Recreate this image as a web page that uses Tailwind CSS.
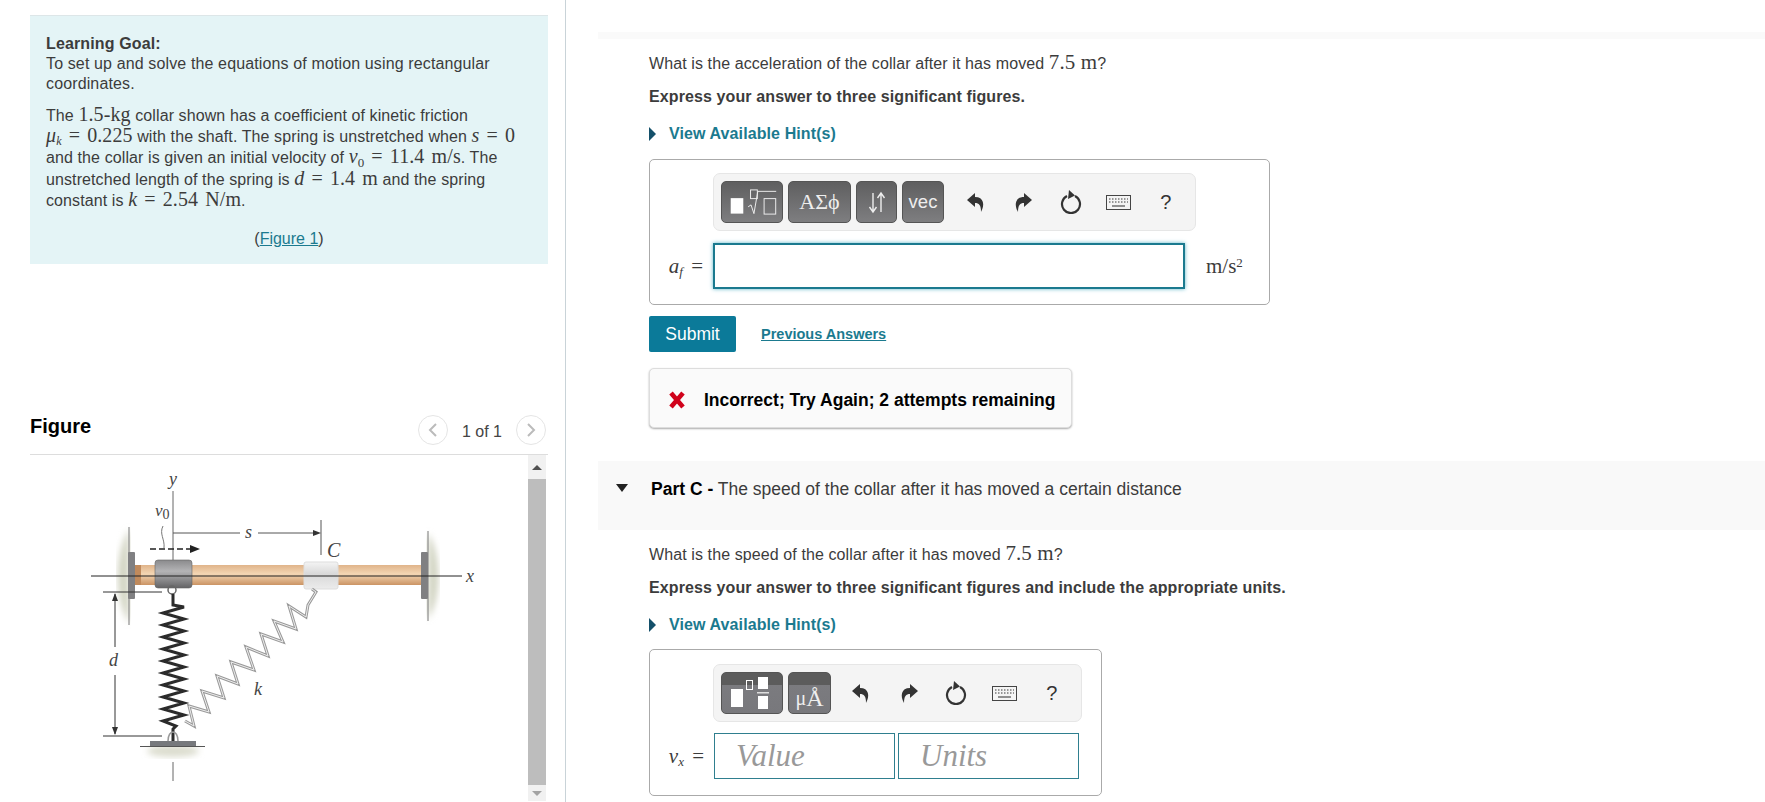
<!DOCTYPE html>
<html>
  <head>
    <meta charset="UTF-8" />
    <title>Part C</title>
    <script src="https://cdn.jsdelivr.net/npm/@tailwindcss/browser@4"></script>
  </head>
  <body class="bg-white font-['Liberation_Sans',Arial,sans-serif] text-[#3c3c3c]">
    <div class="flex h-[802px] w-[1765px] overflow-hidden">
      <!-- left column -->
      <div class="w-[566px] shrink-0 border-r border-[#c9d3d8] pl-[30px] pr-[17px] pt-[15px]">
        <div class="h-[249px] border-t border-[#dde6e8] bg-[#e4f4f6] px-[16px] pt-[18px] text-[16px] leading-[20px]">
          <p class="tracking-[0.13px]"><b class="font-bold">Learning Goal:</b><br />To set up and solve the equations of motion using rectangular coordinates.</p>
          <p class="mt-[11px] leading-[21.2px] tracking-[0.1px]">
            The <span class="font-['Liberation_Serif',serif] text-[20px] leading-[16px]">1.5-kg</span> collar shown has a coefficient of kinetic friction<br />
            <span class="font-['Liberation_Serif',serif] text-[20px] leading-[16px] [word-spacing:2px]"><i>μ<sub class="text-[12px]">k</sub></i> = 0.225</span> with the shaft. The spring is unstretched when <span class="font-['Liberation_Serif',serif] text-[20px] leading-[16px] [word-spacing:2px]"><i>s</i> = 0</span><br />
            and the collar is given an initial velocity of <span class="font-['Liberation_Serif',serif] text-[20px] leading-[16px] [word-spacing:2px]"><i>v</i><sub class="text-[13px]">0</sub> = 11.4 m/s</span>. The<br />
            unstretched length of the spring is <span class="font-['Liberation_Serif',serif] text-[20px] leading-[16px] [word-spacing:2px]"><i>d</i> = 1.4 m</span> and the spring<br />
            constant is <span class="font-['Liberation_Serif',serif] text-[20px] leading-[16px] [word-spacing:2px]"><i>k</i> = 2.54 N/m</span>.
          </p>
          <p class="mt-[18px] text-center">(<a class="text-[#1b7a8f] underline">Figure 1</a>)</p>
        </div>
        <div class="mt-[150px] flex h-[41px] items-start justify-between border-b border-[#ddd]">
          <h2 class="text-[20px] font-bold leading-[24px] text-black">Figure</h2>
          <div class="mr-[2px] flex items-center gap-[14px] pt-[1px] text-[16px] text-[#444]">
            <span class="flex h-[30px] w-[30px] items-center justify-center rounded-full border border-[#e5e5e5]">
              <svg width="10" height="16" viewBox="0 0 10 16" fill="none" stroke="#bbb" stroke-width="2"><path d="M8 2 L2 8 L8 14" /></svg>
            </span>
            <span class="pt-[3px]">1 of 1</span>
            <span class="flex h-[30px] w-[30px] items-center justify-center rounded-full border border-[#e5e5e5]">
              <svg width="10" height="16" viewBox="0 0 10 16" fill="none" stroke="#bbb" stroke-width="2"><path d="M2 2 L8 8 L2 14" /></svg>
            </span>
          </div>
        </div>
        <div class="flex h-[346px]">
          <svg class="shrink-0" width="498" height="346" viewBox="30 456 498 346">
            <defs>
              <linearGradient id="rod" x1="0" y1="0" x2="0" y2="1"><stop offset="0" stop-color="#e0b48a" /><stop offset="0.45" stop-color="#f3d6b4" /><stop offset="1" stop-color="#cb9464" /></linearGradient>
              <linearGradient id="steel" x1="0" y1="0" x2="0" y2="1"><stop offset="0" stop-color="#8a8a8c" /><stop offset="0.4" stop-color="#b4b4b6" /><stop offset="1" stop-color="#636365" /></linearGradient>
              <linearGradient id="ghost" x1="0" y1="0" x2="0" y2="1"><stop offset="0" stop-color="#f4f4f4" /><stop offset="0.45" stop-color="#d8d8d8" /><stop offset="1" stop-color="#ececec" /></linearGradient>
              <filter id="soft"><feGaussianBlur stdDeviation="3" /></filter>
            </defs>
            <!-- wall shading -->
            <path d="M129 530 C114 555 114 600 129 624 Z" fill="#d3d5c4" filter="url(#soft)" />
            <path d="M428 534 C442 555 442 600 428 620 Z" fill="#d3d5c4" filter="url(#soft)" />
            <ellipse cx="173" cy="752" rx="26" ry="6" fill="#dcddcf" filter="url(#soft)" />
            <path d="M129 528 V626 M428 532 V622" stroke="#777" stroke-width="1" />
            <rect x="128" y="553" width="7" height="47" rx="1" fill="#808082" />
            <rect x="421" y="553" width="7" height="47" rx="1" fill="#808082" />
            <!-- shaft -->
            <rect x="135" y="566" width="286" height="20" fill="url(#rod)" />
            <rect x="135" y="566" width="6" height="20" fill="#c08a5c" />
            <rect x="304" y="563" width="34" height="27" rx="2" fill="url(#ghost)" stroke="#ddd" />
            <rect x="155" y="561" width="37" height="28" rx="3" fill="url(#steel)" stroke="#666" stroke-width="0.6" />
            <path d="M91 577 H462" stroke="#222" stroke-width="1" />
            <!-- axes and dimensions -->
            <path d="M173 492 V561 M173 763 V782" stroke="#666" stroke-width="1" />
            <path d="M173 534 H240 M258 534 H318 M321 521 V556" stroke="#555" stroke-width="1" />
            <path d="M321 534 L313 531 V537 Z" fill="#333" />
            <path d="M150 550 H192" stroke="#222" stroke-width="1.4" stroke-dasharray="6 3" />
            <path d="M200 550 L190 546 V554 Z" fill="#222" />
            <path d="M163 527 C159 535 165 540 164 549" stroke="#777" fill="none" />
            <path d="M103 593 H162 M103 737 H162" stroke="#333" stroke-width="1" />
            <path d="M115 595 V648 M115 676 V735" stroke="#333" stroke-width="1" />
            <path d="M115 594 L112 602 H118 Z M115 736 L112 728 H118 Z" fill="#333" />
            <!-- ghost spring -->
            <path d="M312 590 L316 593 L308 606 L306 618 L289 607 L296 630 L274 622 L283 643 L261 635 L268 657 L246 648 L254 671 L231 663 L238 685 L217 677 L224 699 L202 692 L209 713 L189 707 L194 727 L185 722" fill="none" stroke="#9a9a9a" stroke-width="3" />
            <path d="M312 590 L316 593 L308 606 L306 618 L289 607 L296 630 L274 622 L283 643 L261 635 L268 657 L246 648 L254 671 L231 663 L238 685 L217 677 L224 699 L202 692 L209 713 L189 707 L194 727 L185 722" fill="none" stroke="#eee" stroke-width="1" />
            <!-- spring -->
            <circle cx="172" cy="591" r="4" fill="none" stroke="#666" stroke-width="1.5" />
            <path d="M173 595 V606 L184 608 L163 614 L184 620 L163 626 L184 632 L163 638 L184 644 L163 650 L184 656 L163 662 L184 668 L163 674 L184 680 L163 686 L184 692 L163 698 L184 704 L163 710 L184 716 L163 722 L176 727 L173 730 V742" fill="none" stroke="#2b2b2b" stroke-width="3" />
            <path d="M168 742 C168 730 178 730 178 742" fill="none" stroke="#999" stroke-width="1.5" />
            <rect x="150" y="742" width="46" height="5" fill="#77797d" />
            <path d="M140 747.5 H205" stroke="#555" stroke-width="1" />
            <!-- labels -->
            <g font-family="Liberation Serif, serif" font-style="italic" fill="#444">
              <text x="169" y="486" font-size="18">y</text>
              <text x="155" y="517" font-size="17">v<tspan font-size="14" font-style="normal" dy="3">0</tspan></text>
              <text x="245" y="539" font-size="18">s</text>
              <text x="327" y="558" font-size="20">C</text>
              <text x="466" y="583" font-size="18">x</text>
              <text x="109" y="667" font-size="18">d</text>
              <text x="254" y="696" font-size="18">k</text>
            </g>
          </svg>
          <!-- scrollbar -->
          <div class="flex w-[18px] flex-col items-center bg-white">
            <div class="flex h-[24px] w-full items-center justify-center bg-[#f1f1f1]">
              <div class="h-0 w-0 border-x-[5px] border-b-[5px] border-x-transparent border-b-[#505050]"></div>
            </div>
            <div class="h-[306px] w-full bg-[#bdbdbd]"></div>
            <div class="flex h-[16px] w-full items-center justify-center bg-[#f1f1f1]">
              <div class="h-0 w-0 border-x-[5px] border-t-[5px] border-x-transparent border-t-[#a3a3a3]"></div>
            </div>
          </div>
        </div>
      </div>

      <!-- right column -->
      <div class="flex-1 pl-[32px] pt-[32px] text-[16px] leading-[20px]">
        <div class="h-[7px] bg-[#fafafa]"></div>
        <div class="pl-[51px]">
          <p class="mt-[15px] tracking-[0.1px]">What is the acceleration of the collar after it has moved <span class="font-['Liberation_Serif',serif] text-[21px] leading-[16px]">7.5 m</span>?</p>
          <p class="mt-[13px] font-bold tracking-[0.11px]">Express your answer to three significant figures.</p>
          <p class="mt-[17px] flex items-center font-bold tracking-[0.1px] text-[#1b7a8f]">
            <span class="mr-[13px] h-0 w-0 border-y-[7px] border-l-[7px] border-y-transparent border-l-[#14506a]"></span>View Available Hint(s)
          </p>

          <!-- answer box a_f -->
          <div class="mt-[15px] flex h-[146px] w-[621px] flex-col rounded-[5px] border border-[#aaa] pl-[63px] pt-[13px]">
            <div class="flex h-[58px] w-[483px] items-center rounded-[7px] border border-[#e6e6e6] bg-[#f4f4f4] pl-[7px]">
              <div class="flex gap-[5px] text-[#eee]">
                <span class="flex h-[42px] w-[62px] items-center justify-center rounded-[5px] border border-[#555] bg-linear-to-b from-[#5f5f60] to-[#7e7e80]">
                  <svg width="62" height="42" viewBox="0 0 62 42" fill="none" stroke="#eee"><rect x="9" y="17" width="13" height="16" fill="#fff" stroke="none" /><rect x="29.5" y="8.5" width="7" height="9" /><path d="M27 26 L30 24 L33 33 L37 10 H56" /><rect x="43.5" y="17.5" width="12" height="16" /></svg>
                </span>
                <span class="flex h-[42px] w-[63px] items-center justify-center rounded-[5px] border border-[#555] bg-linear-to-b from-[#5f5f60] to-[#7e7e80] font-['Liberation_Serif',serif] text-[22px]">ΑΣϕ</span>
                <span class="flex h-[42px] w-[41px] items-center justify-center rounded-[5px] border border-[#555] bg-linear-to-b from-[#5f5f60] to-[#7e7e80]">
                  <svg width="20" height="26" viewBox="0 0 20 26" fill="none" stroke="#eee" stroke-width="1.4"><path d="M6 4 V23 M2.5 18 L6 23 L9.5 18 M14 23 V4 M10.5 9 L14 4 L17.5 9" /></svg>
                </span>
                <span class="flex h-[42px] w-[42px] items-center justify-center rounded-[5px] border border-[#555] bg-linear-to-b from-[#5f5f60] to-[#7e7e80] text-[18.5px]">vec</span>
              </div>
              <div class="ml-[8px] flex items-center text-[#333]">
                <span class="flex w-[47.5px] justify-center"><svg width="20" height="24" viewBox="0 0 20 24" fill="#333"><path d="M9 3 L1 10 L9 17 V13 C13 13 15 15 15 22 C19 15 18 7 9 7 Z" /></svg></span>
                <span class="flex w-[47.5px] justify-center"><svg width="20" height="24" viewBox="0 0 20 24" fill="#333"><path d="M11 3 L19 10 L11 17 V13 C7 13 5 15 5 22 C1 15 2 7 11 7 Z" /></svg></span>
                <span class="flex w-[47.5px] justify-center"><svg width="22" height="24" viewBox="0 0 22 24" fill="none" stroke="#333" stroke-width="2.2"><path d="M7 6 A9 9 0 1 0 15 6" /><path d="M9 0 L15 5.5 L8 9 Z" fill="#333" stroke="none" /></svg></span>
                <span class="flex w-[47.5px] justify-center"><svg width="25" height="15" viewBox="0 0 25 15" fill="none" stroke="#444"><rect x="0.5" y="0.5" width="24" height="14" /><path d="M3 4 H22 M3 7 H22" stroke-dasharray="1.5 1.5" stroke-width="1.6" stroke="#777" /><path d="M6 11 H19" stroke-width="1.6" stroke="#777" /></svg></span>
                <span class="w-[47.5px] text-center text-[20px]">?</span>
              </div>
            </div>
            <div class="mt-[12px] flex items-center">
              <span class="ml-[-50px] w-[50px] pr-[10px] text-right font-['Liberation_Serif',serif] text-[21px] [word-spacing:3px] whitespace-nowrap"><i>a<sub class="text-[13px]">f</sub></i> =</span>
              <div class="h-[46px] w-[472px] border-2 border-[#1b7a8f] bg-white shadow-[0_0_4px_#5fb6c9]"></div>
              <span class="ml-[21px] font-['Liberation_Serif',serif] text-[21px]">m/s<sup class="text-[13px]">2</sup></span>
            </div>
          </div>

          <div class="mt-[11px] flex items-center">
            <span class="flex h-[36px] w-[87px] items-center justify-center rounded-[2px] bg-[#0b7a99] text-[17.5px] text-white">Submit</span>
            <a class="mb-[1px] ml-[25px] text-[14.5px] font-bold text-[#1b7a8f] underline">Previous Answers</a>
          </div>

          <div class="mt-[16px] flex h-[60px] w-[423px] items-center rounded-[5px] border border-[#ddd] bg-[#fafafa] pl-[18px] pt-[4px] text-black shadow-[0_1px_2px_#aaa]">
            <svg width="18" height="18" viewBox="0 0 18 18" fill="none" stroke="#d0021b" stroke-width="4.6"><path d="M3 2 L15 16 M15 2 L3 16" /></svg>
            <span class="ml-[18px] text-[17.5px] font-bold">Incorrect; Try Again; 2 attempts remaining</span>
          </div>
        </div>

        <!-- Part C -->
        <div class="mt-[33px] flex h-[69px] bg-[#f9f9f9] pt-[16px]">
          <span class="ml-[18px] mt-[7px] h-0 w-0 border-x-[6px] border-t-[8px] border-x-transparent border-t-[#222]"></span>
          <p class="ml-[23px] mt-[2px] text-[17.5px]"><b class="font-bold text-black">Part C -</b> The speed of the collar after it has moved a certain distance</p>
        </div>
        <div class="pl-[51px]">
          <p class="mt-[15px] tracking-[0.1px]">What is the speed of the collar after it has moved <span class="font-['Liberation_Serif',serif] text-[21px] leading-[16px]">7.5 m</span>?</p>
          <p class="mt-[13px] font-bold tracking-[0.11px]">Express your answer to three significant figures and include the appropriate units.</p>
          <p class="mt-[17px] flex items-center font-bold tracking-[0.1px] text-[#1b7a8f]">
            <span class="mr-[13px] h-0 w-0 border-y-[7px] border-l-[7px] border-y-transparent border-l-[#14506a]"></span>View Available Hint(s)
          </p>

          <!-- answer box v_x -->
          <div class="mt-[14px] flex h-[147px] w-[453px] flex-col rounded-[5px] border border-[#aaa] pl-[63px] pt-[14px]">
            <div class="flex h-[58px] w-[369px] items-center rounded-[7px] border border-[#e6e6e6] bg-[#f4f4f4] pl-[7px]">
              <div class="flex gap-[5px] text-[#eee]">
                <span class="h-[42px] w-[62px] rounded-[5px] border border-[#555] bg-[linear-gradient(#5c5c5c_0,#5c5c5c_30%,#7b7b7f_30%,#78787c_100%)]">
                  <svg width="60" height="40" viewBox="0 0 60 40" fill="none"><rect x="9" y="16" width="12" height="18" fill="#fff" /><rect x="24.5" y="7.5" width="6" height="9" stroke="#fff" /><rect x="36" y="4" width="10" height="12" fill="#fff" /><rect x="35" y="19" width="12" height="1.5" fill="#ddd" /><rect x="36" y="23" width="10" height="13" fill="#fff" /></svg>
                </span>
                <span class="flex h-[42px] w-[43px] items-end justify-center rounded-[5px] border border-[#555] bg-[linear-gradient(#5c5c5c_0,#5c5c5c_30%,#7b7b7f_30%,#78787c_100%)] pb-[3px] font-['Liberation_Serif',serif] text-[20px] leading-[24px]">μ<span class="text-[24px]">Å</span></span>
              </div>
              <div class="ml-[6px] flex items-center text-[#333]">
                <span class="flex w-[47.75px] justify-center"><svg width="20" height="24" viewBox="0 0 20 24" fill="#333"><path d="M9 3 L1 10 L9 17 V13 C13 13 15 15 15 22 C19 15 18 7 9 7 Z" /></svg></span>
                <span class="flex w-[47.75px] justify-center"><svg width="20" height="24" viewBox="0 0 20 24" fill="#333"><path d="M11 3 L19 10 L11 17 V13 C7 13 5 15 5 22 C1 15 2 7 11 7 Z" /></svg></span>
                <span class="flex w-[47.75px] justify-center"><svg width="22" height="24" viewBox="0 0 22 24" fill="none" stroke="#333" stroke-width="2.2"><path d="M7 6 A9 9 0 1 0 15 6" /><path d="M9 0 L15 5.5 L8 9 Z" fill="#333" stroke="none" /></svg></span>
                <span class="flex w-[47.75px] justify-center"><svg width="25" height="15" viewBox="0 0 25 15" fill="none" stroke="#444"><rect x="0.5" y="0.5" width="24" height="14" /><path d="M3 4 H22 M3 7 H22" stroke-dasharray="1.5 1.5" stroke-width="1.6" stroke="#777" /><path d="M6 11 H19" stroke-width="1.6" stroke="#777" /></svg></span>
                <span class="w-[47.75px] text-center text-[20px]">?</span>
              </div>
            </div>
            <div class="mt-[11px] flex items-center gap-[3px]">
              <span class="ml-[-50px] w-[48px] pr-[7px] text-right font-['Liberation_Serif',serif] text-[21px] [word-spacing:3px] whitespace-nowrap"><i>v<sub class="text-[13px]">x</sub></i> =</span>
              <div class="flex h-[46px] w-[181px] items-center border border-[#2f7f8f] pl-[21px] font-['Liberation_Serif',serif] text-[31px] italic text-[#999]">Value</div>
              <div class="flex h-[46px] w-[181px] items-center border border-[#2f7f8f] pl-[21px] font-['Liberation_Serif',serif] text-[31px] italic text-[#999]">Units</div>
            </div>
          </div>
        </div>
      </div>
    </div>
  </body>
</html>
